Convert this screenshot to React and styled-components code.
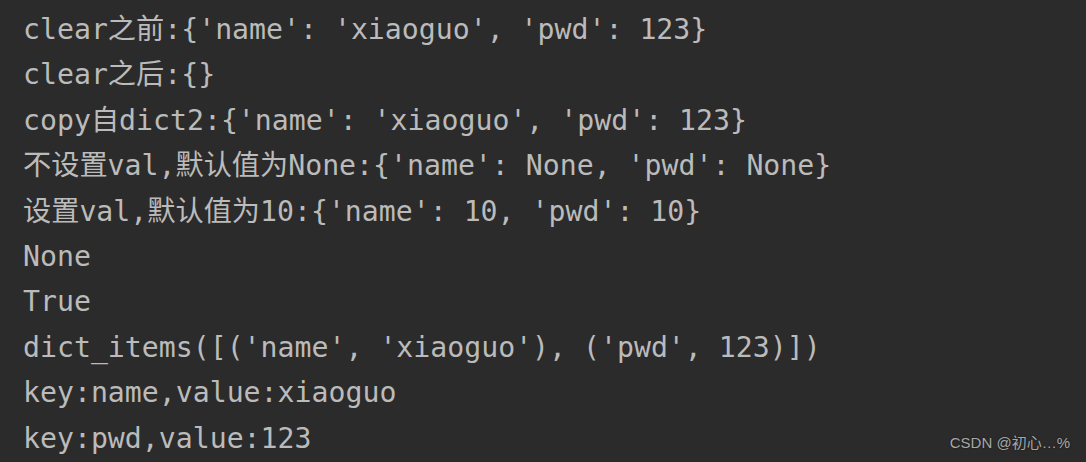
import React from "react";
import styled, { createGlobalStyle } from "styled-components";

const lines = [
  "clear之前:{'name': 'xiaoguo', 'pwd': 123}",
  "clear之后:{}",
  "copy自dict2:{'name': 'xiaoguo', 'pwd': 123}",
  "不设置val,默认值为None:{'name': None, 'pwd': None}",
  "设置val,默认值为10:{'name': 10, 'pwd': 10}",
  "None",
  "True",
  "dict_items([('name', 'xiaoguo'), ('pwd', 123)])",
  "key:name,value:xiaoguo",
  "key:pwd,value:123",
];

function App() {
  return (
    <>
      <GlobalStyle />
      <Console>
        {lines.map((line, i) => (
          <Line key={i}>{line}</Line>
        ))}
        <Watermark>CSDN @初心…%</Watermark>
      </Console>
    </>
  );
}

const GlobalStyle = createGlobalStyle`
  html, body {
    margin: 0;
    padding: 0;
    background: #2b2b2b;
  }
`;

const Console = styled.div`
  position: relative;
  width: 1086px;
  height: 462px;
  box-sizing: border-box;
  padding: 7px 0 0 23px;
  background: #2b2b2b;
  overflow: hidden;
`;

const Line = styled.div`
  font-family: "DejaVu Sans Mono", "Noto Sans CJK SC", monospace;
  font-size: 28.2px;
  line-height: 45.4px;
  height: 45.4px;
  color: #bbbbbb;
  white-space: pre;
`;

const Watermark = styled.div`
  position: absolute;
  right: 16px;
  bottom: 10px;
  font-family: "Liberation Sans", "Noto Sans CJK SC", sans-serif;
  font-size: 15px;
  color: #a8a8a8;
  text-shadow: 0 0 2px rgba(0, 0, 0, 0.6);
`;

export default App;
